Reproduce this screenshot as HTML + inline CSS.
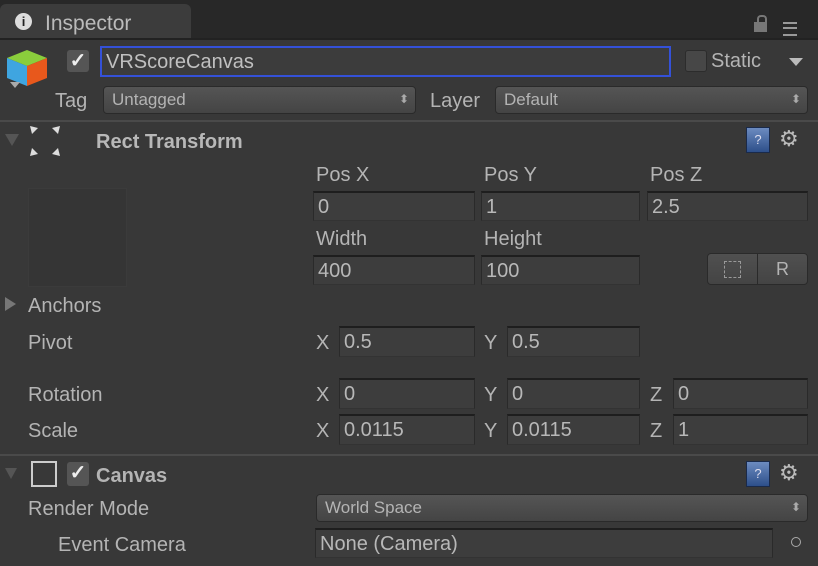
<!DOCTYPE html>
<html><head><style>
body{margin:0;width:818px;height:566px;background:#383838;overflow:hidden;font-family:"Liberation Sans",sans-serif;color:#b4b4b4;position:relative}
.a{position:absolute;white-space:nowrap}
.t{font-size:20px}
.f{position:absolute;background:#3d3d3d;border-top:2px solid #1e1e1e;border-left:1px solid #2a2a2a;border-right:1px solid #2a2a2a;border-bottom:1px solid #333;box-sizing:border-box;font-size:20px;color:#b8b8b8;padding-left:4px;line-height:29px}
.dd{position:absolute;background:linear-gradient(#555,#444);border:1px solid #2a2a2a;border-radius:4px;box-sizing:border-box;font-size:17px;color:#b4b4b4;padding-left:8px;line-height:25px}
.dd:after{content:"⬍";position:absolute;right:6px;font-size:12px;color:#aaa}
</style></head><body>
<div class="a" style="left:0;top:0;width:818px;height:38px;background:#282828"></div>
<div class="a" style="left:0;top:4px;width:191px;height:34px;background:#3c3c3c;border-radius:6px 6px 0 0"></div>
<div class="a" style="left:15px;top:13px;width:17px;height:17px;border-radius:50%;background:#ddd;color:#222;font-size:13px;font-weight:bold;text-align:center;line-height:17px">i</div>
<div class="a t" style="left:45px;top:12px;font-size:21px;color:#bbb">Inspector</div>
<div class="a" style="left:754px;top:22px;width:13px;height:10px;background:#777"></div>
<div class="a" style="left:757px;top:15px;width:6px;height:8px;border:2px solid #777;border-bottom:none;border-radius:4px 4px 0 0"></div>
<div class="a" style="left:783px;top:22px;width:14px;height:10px;border-top:2px solid #999;border-bottom:2px solid #999"></div>
<div class="a" style="left:783px;top:27px;width:14px;height:2px;background:#999"></div>
<div class="a" style="left:0;top:38px;width:818px;height:2px;background:#222"></div>
<svg class="a" style="left:5px;top:48px" width="44" height="44"><polygon points="2,10 22,2 42,10 22,18" fill="#8acd3c"/><polygon points="2,10 22,18 22,38 2,30" fill="#3fa5e0"/><polygon points="22,18 42,10 42,30 22,38" fill="#e8581c"/><polygon points="5,34 15,34 10,40" fill="#aaa"/></svg>
<div class="a" style="left:67px;top:50px;width:22px;height:22px;background:#555;border-radius:3px;color:#eee;font-size:20px;line-height:22px;text-align:center;font-weight:bold">✓</div>
<div class="a" style="left:100px;top:46px;width:571px;height:31px;border:2px solid #3451d8;box-sizing:border-box;background:#3c3c3c"></div>
<div class="a t" style="left:106px;top:51px;color:#c0c0c0">VRScoreCanvas</div>
<div class="a" style="left:685px;top:50px;width:22px;height:22px;background:#474747;border:1px solid #2c2c2c;border-radius:3px;box-sizing:border-box"></div>
<div class="a t" style="left:711px;top:50px">Static</div>
<div class="a" style="left:789px;top:58px;border:7px solid transparent;border-top:8px solid #bbb"></div>
<div class="a t" style="left:55px;top:90px">Tag</div>
<div class="dd" style="left:103px;top:86px;width:313px;height:28px">Untagged</div>
<div class="a t" style="left:430px;top:90px">Layer</div>
<div class="dd" style="left:495px;top:86px;width:313px;height:28px">Default</div>
<div class="a" style="left:0;top:120px;width:818px;height:2px;background:#4a4a4a"></div>
<div class="a" style="left:5px;top:134px;border:7px solid transparent;border-top:12px solid #555"></div>
<svg class="a" style="left:28px;top:124px" width="34" height="34" fill="#ddd"><polygon points="2,2 10,4 4,10"/><polygon points="32,2 24,4 30,10"/><polygon points="2,32 10,30 4,24"/><polygon points="32,32 24,30 30,24"/></svg>
<div class="a t" style="left:96px;top:131px;font-weight:bold;color:#b8b8b8">Rect Transform</div>
<div class="a" style="left:746px;top:127px;width:22px;height:24px;background:linear-gradient(#6c8bc0,#2d4f8a);border:1px solid #1a2a4a;color:#dde;font-size:13px;text-align:center;line-height:24px">?</div>
<div class="a" style="left:779px;top:126px;font-size:22px;color:#bbb">⚙</div>
<div class="a" style="left:28px;top:188px;width:97px;height:97px;background:#353535;border:1px solid #3b3b3b"></div>
<div class="a t" style="left:316px;top:164px">Pos X</div>
<div class="a t" style="left:484px;top:164px">Pos Y</div>
<div class="a t" style="left:650px;top:164px">Pos Z</div>
<div class="f" style="left:313px;top:191px;width:162px;height:30px">0</div>
<div class="f" style="left:481px;top:191px;width:159px;height:30px">1</div>
<div class="f" style="left:647px;top:191px;width:161px;height:30px">2.5</div>
<div class="a t" style="left:316px;top:228px">Width</div>
<div class="a t" style="left:484px;top:228px">Height</div>
<div class="f" style="left:313px;top:255px;width:162px;height:30px">400</div>
<div class="f" style="left:481px;top:255px;width:159px;height:30px">100</div>
<div class="a" style="left:707px;top:253px;width:101px;height:32px;background:linear-gradient(#505050,#444);border:1px solid #2a2a2a;border-radius:4px;box-sizing:border-box"></div>
<div class="a" style="left:757px;top:254px;width:1px;height:30px;background:#2a2a2a"></div>
<div class="a" style="left:724px;top:261px;width:15px;height:15px;border:1px dashed #999"></div>
<div class="a t" style="left:776px;top:259px;font-size:18px">R</div>
<div class="a" style="left:5px;top:297px;border:7px solid transparent;border-left:11px solid #777;border-right:none"></div>
<div class="a t" style="left:28px;top:295px">Anchors</div>
<div class="a t" style="left:28px;top:332px">Pivot</div>
<div class="a t" style="left:316px;top:332px">X</div><div class="f" style="left:339px;top:326px;width:136px;height:31px">0.5</div>
<div class="a t" style="left:484px;top:332px">Y</div><div class="f" style="left:507px;top:326px;width:133px;height:31px">0.5</div>
<div class="a t" style="left:28px;top:384px">Rotation</div>
<div class="a t" style="left:316px;top:384px">X</div><div class="f" style="left:339px;top:378px;width:136px;height:31px">0</div>
<div class="a t" style="left:484px;top:384px">Y</div><div class="f" style="left:507px;top:378px;width:133px;height:31px">0</div>
<div class="a t" style="left:650px;top:384px">Z</div><div class="f" style="left:673px;top:378px;width:135px;height:31px">0</div>
<div class="a t" style="left:28px;top:420px">Scale</div>
<div class="a t" style="left:316px;top:420px">X</div><div class="f" style="left:339px;top:414px;width:136px;height:31px">0.0115</div>
<div class="a t" style="left:484px;top:420px">Y</div><div class="f" style="left:507px;top:414px;width:133px;height:31px">0.0115</div>
<div class="a t" style="left:650px;top:420px">Z</div><div class="f" style="left:673px;top:414px;width:135px;height:31px">1</div>
<div class="a" style="left:0;top:454px;width:818px;height:2px;background:#4a4a4a"></div>
<div class="a" style="left:5px;top:468px;border:6px solid transparent;border-top:11px solid #555"></div>
<div class="a" style="left:31px;top:461px;width:26px;height:26px;border:2px solid #ccc;box-sizing:border-box"></div>
<div class="a" style="left:67px;top:462px;width:22px;height:24px;background:#555;border-radius:3px;color:#eee;font-size:20px;line-height:22px;text-align:center;font-weight:bold">✓</div>
<div class="a t" style="left:96px;top:465px;font-weight:bold">Canvas</div>
<div class="a" style="left:746px;top:461px;width:22px;height:24px;background:linear-gradient(#6c8bc0,#2d4f8a);border:1px solid #1a2a4a;color:#dde;font-size:13px;text-align:center;line-height:24px">?</div>
<div class="a" style="left:779px;top:460px;font-size:22px;color:#bbb">⚙</div>
<div class="a t" style="left:28px;top:498px">Render Mode</div>
<div class="dd" style="left:316px;top:494px;width:492px;height:28px">World Space</div>
<div class="a t" style="left:58px;top:534px">Event Camera</div>
<div class="f" style="left:315px;top:528px;width:458px;height:30px">None (Camera)</div>
<div class="a" style="left:791px;top:537px;width:10px;height:10px;border:1px solid #aaa;border-radius:50%;box-sizing:border-box"></div>
</body></html>
